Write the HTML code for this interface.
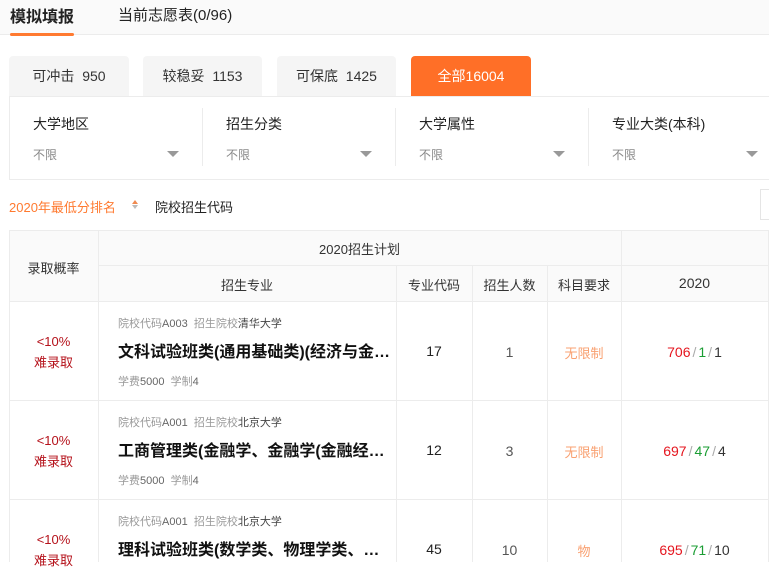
<!DOCTYPE html>
<html><head><meta charset="utf-8"><style>
*{margin:0;padding:0;box-sizing:border-box}
body{width:769px;height:562px;overflow:hidden;background:#fff;font-family:"Liberation Sans","Noto Sans CJK SC",sans-serif;color:#333;position:relative}
.a{position:absolute}
.tab{position:absolute;top:56px;height:40px;background:#f5f5f5;border-radius:4px 4px 0 0;font-size:14px;line-height:40px;text-align:center;color:#333}
.fl{position:absolute;top:96px;height:84px}
.fl .t{position:absolute;left:24px;top:18px;font-size:14px;color:#222}
.fl .v{position:absolute;left:24px;top:50px;font-size:12px;color:#888}
.fl .ar{position:absolute;top:55px;width:0;height:0;border-left:6px solid transparent;border-right:6px solid transparent;border-top:6px solid #999}
.vl{position:absolute;background:#ececec;width:1px}
.hl{position:absolute;background:#ececec;height:1px}
.c{position:absolute;text-align:center}
.s{color:#aaa;margin:0 2px}
</style></head><body>
<div class="a" style="left:0;top:0;width:769px;height:35px;background:#fafafa;border-bottom:1px solid #ececec"></div>
<div class="a" style="left:10px;top:3px;font-size:16px;font-weight:bold;color:#222">模拟填报</div>
<div class="a" style="left:118px;top:4px;font-size:15px;color:#222">当前志愿表(0/96)</div>
<div class="a" style="left:10px;top:33px;width:64px;height:3px;background:#ff7a30;border-radius:2px"></div>

<div class="tab" style="left:9px;width:120px">可冲击&nbsp;&nbsp;950</div>
<div class="tab" style="left:143px;width:119px">较稳妥&nbsp;&nbsp;1153</div>
<div class="tab" style="left:277px;width:119px">可保底&nbsp;&nbsp;1425</div>
<div class="tab" style="left:411px;width:120px;background:#ff6f27;color:#fff">全部16004</div>

<div class="a" style="left:9px;top:96px;width:770px;height:84px;border:1px solid #ececec"></div>
<div class="fl" style="left:9px;width:193px"><div class="t">大学地区</div><div class="v">不限</div><div class="ar" style="left:158px"></div></div>
<div class="vl" style="left:202px;top:108px;height:58px"></div>
<div class="fl" style="left:202px;width:193px"><div class="t">招生分类</div><div class="v">不限</div><div class="ar" style="left:158px"></div></div>
<div class="vl" style="left:395px;top:108px;height:58px"></div>
<div class="fl" style="left:395px;width:193px"><div class="t">大学属性</div><div class="v">不限</div><div class="ar" style="left:158px"></div></div>
<div class="vl" style="left:588px;top:108px;height:58px"></div>
<div class="fl" style="left:588px;width:193px"><div class="t">专业大类(本科)</div><div class="v">不限</div><div class="ar" style="left:158px"></div></div>

<div class="a" style="left:9px;top:197px;font-size:13px;color:#ff7a30">2020年最低分排名</div>
<div class="a" style="left:132px;top:200px;width:0;height:0;border-left:3px solid transparent;border-right:3px solid transparent;border-bottom:4px solid #f08a50"></div>
<div class="a" style="left:132px;top:205px;width:0;height:0;border-left:3px solid transparent;border-right:3px solid transparent;border-top:4px solid #bbb"></div>
<div class="a" style="left:155px;top:197px;font-size:13px;color:#222">院校招生代码</div>
<div class="a" style="left:760px;top:189px;width:12px;height:31px;border:1px solid #e5e5e5"></div>

<div class="a" style="left:9px;top:230px;width:760px;height:71px;background:#fafafa"></div>
<div class="hl" style="left:9px;top:230px;width:760px"></div>
<div class="hl" style="left:98px;top:265px;width:671px"></div>
<div class="hl" style="left:9px;top:301px;width:760px"></div>
<div class="hl" style="left:9px;top:400px;width:760px"></div>
<div class="hl" style="left:9px;top:499px;width:760px"></div>
<div class="vl" style="left:9px;top:230px;height:332px"></div>
<div class="vl" style="left:98px;top:230px;height:332px"></div>
<div class="vl" style="left:396px;top:265px;height:297px"></div>
<div class="vl" style="left:472px;top:265px;height:297px"></div>
<div class="vl" style="left:547px;top:265px;height:297px"></div>
<div class="vl" style="left:621px;top:230px;height:332px"></div>
<div class="vl" style="left:768px;top:230px;height:332px"></div>

<div class="c" style="left:9px;width:89px;top:258px;font-size:13px">录取概率</div>
<div class="c" style="left:98px;width:523px;top:239px;font-size:13px">2020招生计划</div>
<div class="c" style="left:98px;width:298px;top:275px;font-size:13px">招生专业</div>
<div class="c" style="left:396px;width:76px;top:275px;font-size:13px">专业代码</div>
<div class="c" style="left:472px;width:75px;top:275px;font-size:13px">招生人数</div>
<div class="c" style="left:547px;width:74px;top:275px;font-size:13px">科目要求</div>
<div class="c" style="left:621px;width:147px;top:275px;font-size:14px">2020</div>

<div class="c" style="left:9px;width:89px;top:331px;font-size:13px;color:#b5121b;line-height:21px">&lt;10%<br>难录取</div>
<div class="a" style="left:118px;top:315px;font-size:11px;color:#999">院校代码<span style="color:#666">A003</span>&nbsp;&nbsp;招生院校<span style="color:#444">清华大学</span></div>
<div class="a" style="left:118px;top:338px;font-size:16px;font-weight:bold;color:#111;white-space:nowrap">文科试验班类(通用基础类)(经济与金…</div>
<div class="a" style="left:118px;top:373px;font-size:11px;color:#999">学费<span style="color:#666">5000</span>&nbsp;&nbsp;学制<span style="color:#666">4</span></div>
<div class="c" style="left:396px;width:76px;top:343px;font-size:14px;color:#222">17</div>
<div class="c" style="left:472px;width:75px;top:344px;font-size:14px;color:#555">1</div>
<div class="c" style="left:547px;width:74px;top:343px;font-size:13px;color:#f9a070">无限制</div>
<div class="c" style="left:621px;width:147px;top:344px;font-size:14px"><span style="color:#e5161f">706</span><span class="s">/</span><span style="color:#1a9d33">1</span><span class="s">/</span><span style="color:#333">1</span></div>

<div class="c" style="left:9px;width:89px;top:430px;font-size:13px;color:#b5121b;line-height:21px">&lt;10%<br>难录取</div>
<div class="a" style="left:118px;top:414px;font-size:11px;color:#999">院校代码<span style="color:#666">A001</span>&nbsp;&nbsp;招生院校<span style="color:#444">北京大学</span></div>
<div class="a" style="left:118px;top:437px;font-size:16px;font-weight:bold;color:#111;white-space:nowrap">工商管理类(金融学、金融学(金融经…</div>
<div class="a" style="left:118px;top:472px;font-size:11px;color:#999">学费<span style="color:#666">5000</span>&nbsp;&nbsp;学制<span style="color:#666">4</span></div>
<div class="c" style="left:396px;width:76px;top:442px;font-size:14px;color:#222">12</div>
<div class="c" style="left:472px;width:75px;top:443px;font-size:14px;color:#555">3</div>
<div class="c" style="left:547px;width:74px;top:442px;font-size:13px;color:#f9a070">无限制</div>
<div class="c" style="left:621px;width:147px;top:443px;font-size:14px"><span style="color:#e5161f">697</span><span class="s">/</span><span style="color:#1a9d33">47</span><span class="s">/</span><span style="color:#333">4</span></div>

<div class="c" style="left:9px;width:89px;top:529px;font-size:13px;color:#b5121b;line-height:21px">&lt;10%<br>难录取</div>
<div class="a" style="left:118px;top:513px;font-size:11px;color:#999">院校代码<span style="color:#666">A001</span>&nbsp;&nbsp;招生院校<span style="color:#444">北京大学</span></div>
<div class="a" style="left:118px;top:536px;font-size:16px;font-weight:bold;color:#111;white-space:nowrap">理科试验班类(数学类、物理学类、…</div>
<div class="c" style="left:396px;width:76px;top:541px;font-size:14px;color:#222">45</div>
<div class="c" style="left:472px;width:75px;top:542px;font-size:14px;color:#555">10</div>
<div class="c" style="left:547px;width:74px;top:541px;font-size:13px;color:#f9a070">物</div>
<div class="c" style="left:621px;width:147px;top:542px;font-size:14px"><span style="color:#e5161f">695</span><span class="s">/</span><span style="color:#1a9d33">71</span><span class="s">/</span><span style="color:#333">10</span></div>
</body></html>
